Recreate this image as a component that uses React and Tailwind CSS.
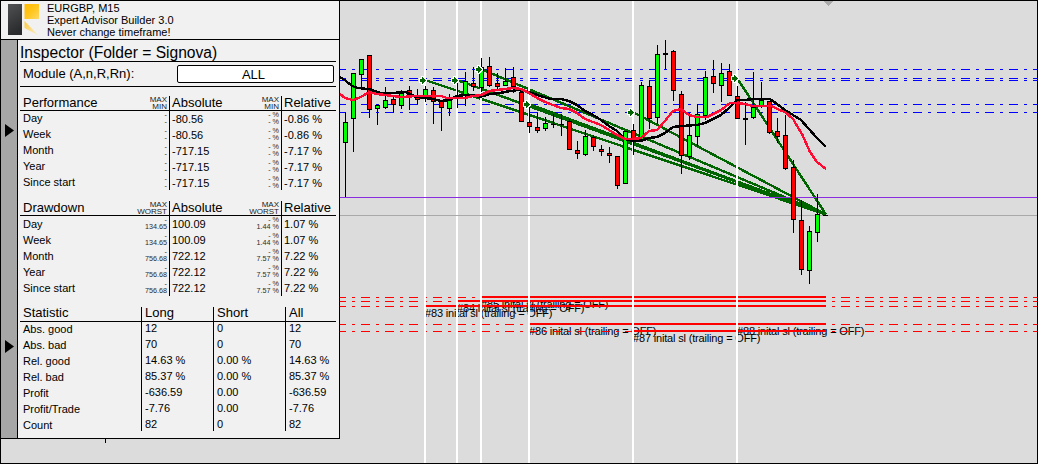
import React from "react";

const UP = "#00ff00";
const DOWN = "#ff0000";

// x, high, body top, body bottom, low, direction (0 = doji)
const candles = [
  [345, 112, 122, 143, 197, 1], [353, 73, 73, 119, 152, 1], [361, 59, 59, 75, 88, 1], [369, 55, 55, 110, 118, -1],
  [377, 104, 105, 109, 125, 1], [385, 87, 100, 108, 109, 1], [393, 96, 99, 105, 113, -1], [401, 90, 93, 106, 109, 1],
  [409, 86, 90, 95, 110, -1], [417, 89, 95, 100, 104, -1], [425, 86, 89, 97, 102, 1], [433, 87, 90, 102, 124, -1],
  [441, 100, 100, 108, 131, -1], [449, 94, 97, 109, 116, 1], [457, 82, 95, 96, 108, 0], [465, 72, 81, 95, 106, 1],
  [473, 67, 83, 87, 91, -1], [481, 58, 67, 88, 92, 1], [489, 57, 66, 86, 87, -1], [497, 73, 83, 87, 89, -1],
  [505, 68, 81, 86, 86, 1], [513, 67, 77, 87, 93, -1], [521, 90, 92, 122, 122, -1], [529, 106, 122, 127, 133, -1],
  [537, 112, 127, 131, 133, -1], [545, 117, 123, 129, 131, 1], [553, 114, 124, 125, 128, 0], [561, 114, 124, 125, 136, 0],
  [569, 119, 121, 150, 150, -1], [577, 141, 150, 154, 159, -1], [585, 130, 136, 155, 156, 1], [593, 135, 137, 147, 151, -1],
  [601, 145, 149, 152, 156, -1], [609, 147, 153, 156, 163, -1], [617, 156, 156, 186, 189, -1], [625, 131, 131, 184, 184, 1],
  [633, 124, 130, 139, 155, -1], [641, 82, 85, 140, 140, 1], [649, 80, 86, 119, 129, -1], [657, 45, 54, 118, 124, 1],
  [665, 40, 53, 55, 69, 0], [673, 50, 51, 91, 101, -1], [681, 91, 94, 156, 174, -1], [689, 113, 135, 157, 160, 1],
  [697, 104, 114, 137, 146, 1], [705, 71, 77, 116, 120, 1], [713, 60, 76, 84, 93, -1], [721, 63, 73, 86, 102, 1],
  [729, 64, 71, 96, 96, -1], [737, 86, 96, 119, 119, -1], [745, 72, 118, 120, 145, 0], [753, 72, 107, 118, 119, 1],
  [761, 82, 100, 106, 108, 1], [769, 101, 101, 133, 134, -1], [777, 118, 131, 137, 143, -1], [785, 115, 135, 169, 170, -1],
  [793, 160, 167, 220, 233, -1], [801, 200, 220, 270, 275, -1], [809, 226, 231, 271, 284, 1], [817, 194, 214, 233, 242, 1],
].map((c) => (c[0] === 745 ? [745, 102, 118, 120, 145, 0] : c));

const slowAverage =
  "340,77 346,81 352,86 358,88 368,89 375,91 381,93 393,93 405,92 410,94 416,97 425,98 433,99 441,101 449,100 457,96 465,95 472,95 480,97 490,94 500,93 510,91 519,90 529,92 540,96 551,99 561,99 569,101 577,105 585,111 593,115 601,120 609,126 617,131 625,139 633,141 641,141 649,138 657,137 665,133 673,127 681,126 697,125 705,123 713,119 721,115 729,108 737,100 745,100 753,99 770,99 777,104 785,110 793,115 801,120 809,129 817,138 826,147";
const fastAverage =
  "340,94 345,98 353,100 361,97 369,92 377,94 385,95 401,97 417,96 441,96 447,98 465,98 473,96 481,95 489,91 497,90 513,88 521,89 529,93 537,98 545,102 561,108 569,109 577,113 585,119 601,125 609,130 617,135 625,139 633,139 641,138 649,131 657,130 665,121 673,111 681,109 689,115 697,117 707,117 713,114 721,110 730,103 738,103 745,104 753,106 772,106 777,109 785,112 793,119 802,134 810,152 817,162 826,169";

const trades = [
  { id: 83, x: 425, open: 80, stop: 306 },
  { id: 84, x: 457, open: 80, stop: 301 },
  { id: 85, x: 481, open: 69, stop: 297 },
  { id: 86, x: 529, open: 104, stop: 324 },
  { id: 87, x: 633, open: 112, stop: 331 },
  { id: 88, x: 737, open: 78, stop: 324 },
];

function Chart() {
  return (
    <svg className="block" width="697" height="462" viewBox="340 1 697 462" shapeRendering="crispEdges">
      <rect x="340" y="1" width="697" height="462" fill="#dcdcdc" />
      <path d="M824 1h9l-4.500 5z" fill="#a9a9a9" />
      {trades.map((t) => (
        <text key={t.id} x={t.x} y={t.stop + 11} className="font-['Liberation_Sans',sans-serif] text-[11px] tracking-[-0.17px]" fill="#000">
          {`#${t.id} inital sl (trailing = OFF)`}
        </text>
      ))}
      <rect x="340" y="215" width="697" height="1" fill="#a9a9a9" />
      {[69, 78, 80, 104, 112].map((y) => (
        <path key={y} d={`M337 ${y + 0.5}H1037`} stroke="#0000ff" strokeDasharray="9 6 3 6" />
      ))}
      {[297, 301, 306, 324, 331].map((y) => (
        <path key={y} d={`M337 ${y + 0.5}H1037`} stroke="#ff0000" strokeDasharray="9 6 3 6" />
      ))}
      {trades.map((t) => (
        <path key={t.id} d={`M${t.x} ${t.open}L826 214.500`} stroke="#006400" strokeWidth="2.4" fill="none" />
      ))}
      {trades.map((t) => (
        <rect key={t.id} x={t.x} y={t.stop - 1} width={826 - t.x} height="2" fill="#ff0000" />
      ))}
      {trades.map((t) => (
        <rect key={t.id} x={t.x - 1} y="1" width="2" height="462" fill="#fff" />
      ))}
      <rect x="340" y="197" width="697" height="1" fill="#8a2be2" />
      <path d="M340 215.500H1037" stroke="#a9a9a9" />
      {candles.map(([x, high, top, bottom, low, dir]) => (
        <g key={x}>
          <rect x={x} y={high} width="1" height={low - high} fill="#000" />
          <rect x={x - 2} y={top} width="5" height={bottom - top} fill="#000" />
          {dir !== 0 && <rect x={x - 1} y={top + 1} width="3" height={bottom - top - 2} fill={dir > 0 ? UP : DOWN} />}
        </g>
      ))}
      <rect x="823" y="215" width="5" height="1" fill="#000" />
      <polyline points={slowAverage} fill="none" stroke="#000" strokeWidth="2.4" strokeLinejoin="round" />
      <polyline points={fastAverage} fill="none" stroke="#ff0a32" strokeWidth="2.4" strokeLinejoin="round" />
      {trades.map((t) => (
        <g key={t.id} transform={`translate(${t.x - 5} ${t.open - 3})`}>
          <path d="M-1 1h2v-2h3v1h1v1h1v1h1v3h-1v1h-1v1h-1v1h-3v-2h-2z" fill="#fff" />
          <path d="M0 2h2v-2h1v1h1v1h1v1h1v1h-1v1h-1v1h-1v1h-1v-2h-2z" fill="#006400" />
        </g>
      ))}
    </svg>
  );
}

function Logo() {
  return (
    <svg width="32" height="32" viewBox="0 0 32 32">
      <defs>
        <linearGradient id="dark" x1="0" y1="0" x2="0.3" y2="1">
          <stop offset="0" stopColor="#505254" />
          <stop offset="1" stopColor="#292b2d" />
        </linearGradient>
        <linearGradient id="gold" x1="0" y1="0" x2="1" y2="1">
          <stop offset="0" stopColor="#ffba00" />
          <stop offset="0.5" stopColor="#ffc61c" />
          <stop offset="1" stopColor="#ffd966" />
        </linearGradient>
        <linearGradient id="fade" x1="0" y1="0" x2="1" y2="1">
          <stop offset="0" stopColor="#ffcb35" />
          <stop offset="1" stopColor="#f7efdc" />
        </linearGradient>
      </defs>
      <rect x="0" y="0" width="14" height="31" fill="url(#dark)" />
      <rect x="16.500" y="0" width="14.500" height="15" fill="url(#gold)" />
      <path d="M16.500 17L30.500 31.500L16.500 24z" fill="url(#fade)" />
    </svg>
  );
}

function Marker() {
  return (
    <svg className="block" width="9" height="13" viewBox="0 0 9 13">
      <path d="M0 0L9 6.500L0 13z" fill="#000" />
    </svg>
  );
}

function Small({ top, bottom, head }) {
  return (
    <div
      className={
        head
          ? "pr-[2px] text-right text-[8px] leading-[7px] whitespace-pre text-[#222]"
          : "pr-[2px] text-right text-[7.2px] leading-[7px] whitespace-pre text-[#2a2a2a]"
      }
    >
      <div>{top}</div>
      <div>{bottom}</div>
    </div>
  );
}

const cell = "border-l border-black pl-[2px]";
const reportCols = "grid grid-cols-[87px_62px_52px_60px_55px]";

function Report({ title, low, rows, leading, shift }) {
  return (
    <div className="w-[316px]">
      <div className={`${reportCols} h-[15px] border-b border-black text-[13px] leading-[14px]`}>
        <div className="pl-[3px]">{title}</div>
        <Small head top="MAX" bottom={low} />
        <div className={`${cell} whitespace-nowrap`}>Absolute</div>
        <Small head top="MAX" bottom={low} />
        <div className={cell}>Relative</div>
      </div>
      {rows.map(([label, a1, a2, abs, r1, r2, rel], i) => (
        <div key={label} className={`${reportCols} ${i === rows.length - 1 ? "h-[15px]" : "h-4"} text-[11px] ${leading}`}>
          <div className="pl-[3px]">{label}</div>
          <Small top={a1} bottom={a2} />
          <div className={`${cell} ${shift} h-full`}>{abs}</div>
          <Small top={r1} bottom={r2} />
          <div className={`${cell} ${shift} h-full`}>{rel}</div>
        </div>
      ))}
    </div>
  );
}

const performance = [
  ["Day", "-", "-", "-80.56", "- %", "- %", "-0.86 %"],
  ["Week", "-", "-", "-80.56", "- %", "- %", "-0.86 %"],
  ["Month", "-", "-", "-717.15", "- %", "- %", "-7.17 %"],
  ["Year", "-", "-", "-717.15", "- %", "- %", "-7.17 %"],
  ["Since start", "-", "-", "-717.15", "- %", "- %", "-7.17 %"],
];

const drawdown = [
  ["Day", "-", "134.65", "100.09", "- %", "1.44 %", "1.07 %"],
  ["Week", "-", "134.65", "100.09", "- %", "1.44 %", "1.07 %"],
  ["Month", "-", "756.68", "722.12", "- %", "7.57 %", "7.22 %"],
  ["Year", "-", "756.68", "722.12", "- %", "7.57 %", "7.22 %"],
  ["Since start", "-", "756.68", "722.12", "- %", "7.57 %", "7.22 %"],
];

const statistic = [
  ["Abs. good", "12", "0", "12"],
  ["Abs. bad", "70", "0", "70"],
  ["Rel. good", "14.63 %", "0.00 %", "14.63 %"],
  ["Rel. bad", "85.37 %", "0.00 %", "85.37 %"],
  ["Profit", "-636.59", "0.00", "-636.59"],
  ["Profit/Trade", "-7.76", "0.00", "-7.76"],
  ["Count", "82", "0", "82"],
];

const statCols = "grid w-[316px] grid-cols-[121px_72px_72px_51px]";
const statCell = "border-l border-black pl-[3px] whitespace-nowrap";

function Statistic() {
  return (
    <div className="mt-3">
      <div className={`${statCols} h-[15px] border-b border-black text-[13px] leading-[12px]`}>
        <div className="pl-[3px]">Statistic</div>
        <div className={statCell}>Long</div>
        <div className={statCell}>Short</div>
        <div className={statCell}>All</div>
      </div>
      {statistic.map(([label, long, short, all], i) => (
        <div key={label} className={`${statCols} ${i === 6 ? "h-[10px]" : "h-4"} text-[11px] leading-[12px]`}>
          <div className="pt-px pl-[3px]">{label}</div>
          <div className={`${statCell} h-full`}>{long}</div>
          <div className={`${statCell} h-full`}>{short}</div>
          <div className={`${statCell} h-full`}>{all}</div>
        </div>
      ))}
    </div>
  );
}

function Panel() {
  return (
    <div className="h-[438px] w-[339px] border-r border-b border-black bg-[#f1f1f1]">
      <header className="flex h-[39px] border-b border-black pt-[3px] pl-[7px]">
        <Logo />
        <div className="-mt-[2px] pl-[7px] text-[11px] leading-3">
          <div>EURGBP, M15</div>
          <div>Expert Advisor Builder 3.0</div>
          <div>Never change timeframe!</div>
        </div>
      </header>
      <div className="flex h-[398px]">
        <div className="flex w-[17px] shrink-0 flex-col gap-[203px] border-r border-black bg-[#a6a6a6] pt-[84px] pl-1">
          <Marker />
          <Marker />
        </div>
        <div className="pl-[2px]">
          <div className="h-[22px] w-[316px] border-b border-black text-[15.6px] leading-[25px] whitespace-nowrap">
            Inspector (Folder = Signova)
          </div>
          <div className="flex h-[25px] w-[316px] justify-between border-b border-black pt-[3px] pr-[2px] pl-[3px] text-[13px] leading-[18px]">
            <span>Module (A,n,R,Rn):</span>
            <div className="h-[18px] w-[157px] rounded-[2px] border border-black bg-white pr-1 text-center leading-[17px]">ALL</div>
          </div>
          <div className="pt-[9px]">
            <Report title="Performance" low="MIN" rows={performance} leading="leading-[14px]" shift="pt-px" />
          </div>
          <div className="pt-[11px]">
            <Report title="Drawdown" low="WORST" rows={drawdown} leading="leading-4" shift="pt-0" />
          </div>
          <Statistic />
        </div>
      </div>
    </div>
  );
}

export default function App() {
  return (
    <main className="flex h-[464px] w-[1038px] overflow-hidden border border-black bg-[#dcdcdc] font-['Liberation_Sans',Arial,sans-serif] text-black">
      <div className="w-[339px] shrink-0">
        <Panel />
        <div className="ml-[104px] h-1 w-px bg-black" />
      </div>
      <Chart />
    </main>
  );
}
